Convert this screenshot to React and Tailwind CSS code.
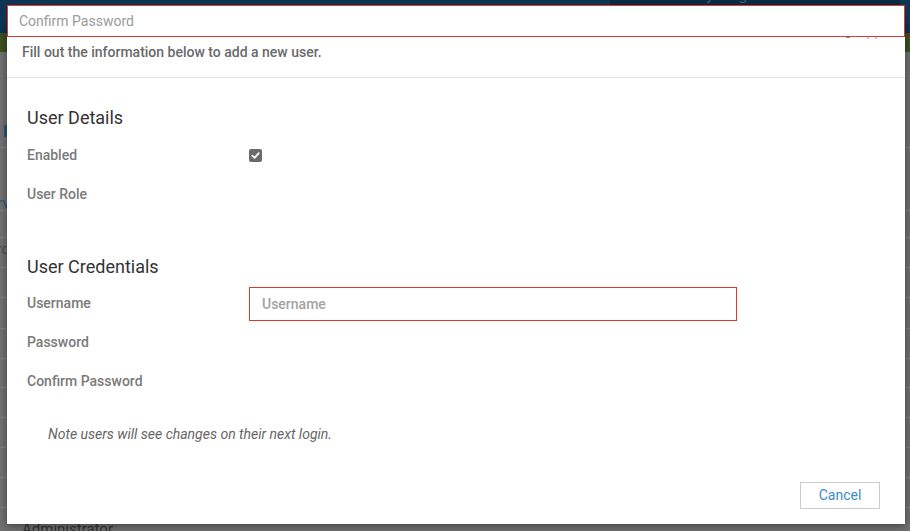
import React from "react";

const bgRows = [147, 210, 237, 267, 297, 328, 358, 387, 417, 447, 477, 507];

function Checkbox() {
  return (
    <div className="w-[13px] h-[13px] rounded-[2px] bg-[#6b6b6b] flex items-center justify-center">
      <svg width="9" height="9" viewBox="0 0 10 10">
        <path d="M1.5 5.2 L4 7.6 L8.6 2.4" fill="none" stroke="#fff" strokeWidth="1.9" strokeLinecap="round" strokeLinejoin="round" />
      </svg>
    </div>
  );
}

function Row({ label, children }) {
  return (
    <div className="flex items-center h-[39px]">
      <div className="w-[222px] shrink-0 text-[14px] font-medium text-[#7a7a7a]">{label}</div>
      {children}
    </div>
  );
}

export default function App() {
  return (
    <div className="relative w-[910px] h-[531px] overflow-hidden bg-[#717171] font-['Roboto',sans-serif]">
      {/* page behind the dialog, dimmed */}
      <div className="flex flex-col">
        <div className="h-[33px] bg-[#0c3654] flex justify-end pr-[10px]">
          <div className="w-[290px] h-[8px] -mt-[3px] bg-[#092a45] text-[15px] leading-[8px] text-[#3f6583] px-[18px] overflow-hidden flex justify-between">
            <span className="-mt-[6px]">Search Everything</span>
            <span className="-mt-[6px]">○</span>
          </div>
        </div>
        <div className="h-[19px] bg-[#3d5120]" />
        <div className="relative flex-1">
          {bgRows.map((y) => (
            <div key={y} className="absolute left-0 right-0 h-px bg-[#838383]" style={{ top: y - 52 }} />
          ))}
          <span className="absolute left-[3px] top-[68px] text-[16px] font-bold text-[#1d4f78]">I</span>
          <span className="absolute -left-[3px] top-[140px] text-[15px] text-[#1d5a86]">rv</span>
          <span className="absolute -left-[3px] top-[187px] text-[14px] text-[#4a4a4a]">rc</span>
          <span className="absolute left-[22px] top-[466px] text-[15px] text-[#333]">Administrator</span>
        </div>
      </div>

      {/* dialog */}
      <div className="absolute left-[7px] top-[20px] w-[898px] h-[504px] bg-white shadow-[0_2px_8px_rgba(0,0,0,0.45)] flex flex-col">
        <div className="relative h-[58px] border-b border-[#e3e3e3] pl-[15px] pt-[24px]">
          <p className="text-[14px] leading-[16px] font-medium text-[#6a6a6a]">Fill out the information below to add a new user.</p>
          <div className="absolute left-[838px] top-[14px] w-[6px] h-[4px] rounded-b-full bg-[#2e8bd0]" />
          <div className="absolute left-[860px] top-[16px] w-[2px] h-[3px] bg-[#b7c9dc]" />
          <div className="absolute left-[868px] top-[16px] w-[2px] h-[3px] bg-[#b7c9dc]" />
        </div>

        <div className="pl-[20px]">
          <h2 className="mt-[28px] mb-[6px] text-[18px] leading-[24px] text-[#333]">User Details</h2>
          <Row label="Enabled">
            <Checkbox />
          </Row>
          <Row label="User Role" />

          <h2 className="mt-[41px] mb-[5px] text-[18px] leading-[24px] text-[#333]">User Credentials</h2>
          <Row label="Username">
            <input
              placeholder="Username"
              className="w-[488px] h-[34px] border border-[#e0392b] px-[12px] text-[14px] font-medium text-[#333] placeholder:text-[#a3a3a3] outline-none"
            />
          </Row>
          <Row label="Password" />
          <Row label="Confirm Password" />

          <p className="mt-[25px] pl-[21px] text-[14px] leading-[16px] italic text-[#666]">
            Note users will see changes on their next login.
          </p>
        </div>

        <div className="mt-auto flex justify-end pr-[25px] pb-[15px]">
          <button className="w-[80px] h-[27px] border border-[#cccccc] bg-white text-[14px] text-[#3a8bd0]">Cancel</button>
        </div>
      </div>

      {/* floating field over the dialog */}
      <input
        placeholder="Confirm Password"
        className="absolute left-[7px] top-[5px] w-[898px] h-[32px] bg-white border border-[#e0392b] px-[11px] text-[14px] text-[#333] placeholder:text-[#9a9a9a] outline-none"
      />
    </div>
  );
}
